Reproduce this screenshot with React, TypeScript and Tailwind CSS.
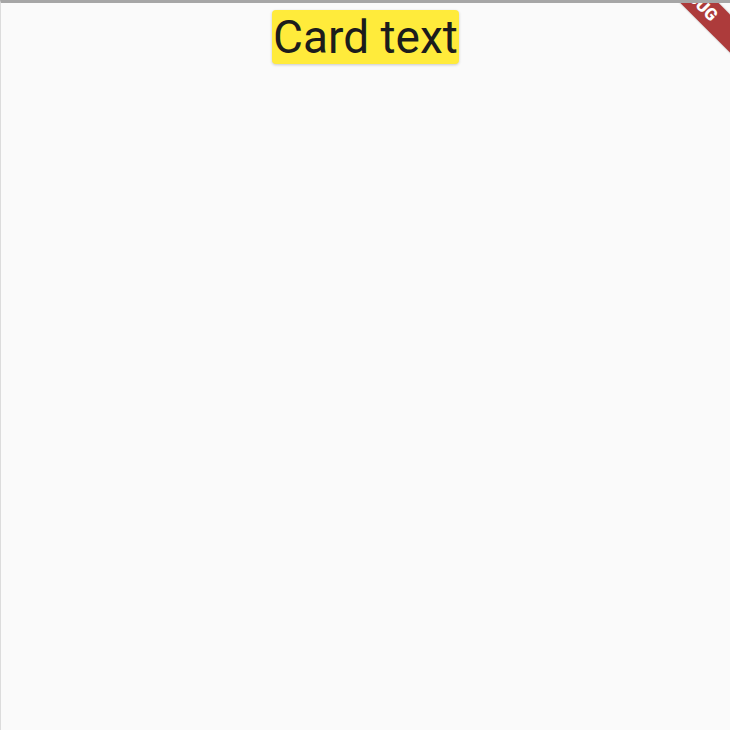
export default function App() {
  return (
    <div className="relative h-[730px] w-full overflow-hidden border-l border-t-[3px] border-l-[#dcdcdc] border-t-[#a6a6a6] bg-[#fafafa]">
      {/* Card */}
      <div className="flex justify-center pt-[7px]">
        <div className="rounded-[4px] bg-[#ffeb3b] px-[1px] shadow-[0_1px_3px_rgba(0,0,0,0.2)]">
          <span className="block text-[46px] leading-[54px] text-[#1c1c1c] [font-family:Roboto,'Liberation_Sans',sans-serif]">
            Card text
          </span>
        </div>
      </div>

      {/* Debug banner */}
      <div className="absolute left-[622px] top-[-20px] flex h-[27px] w-[140px] rotate-45 items-center justify-center bg-[#ad3b3b] pl-[7px] shadow-[0_0_2px_rgba(0,0,0,0.3)]">
        <span className="text-[17px] font-black leading-none text-white [font-family:Roboto,'Liberation_Sans',sans-serif]">
          DEBUG
        </span>
      </div>
    </div>
  );
}
